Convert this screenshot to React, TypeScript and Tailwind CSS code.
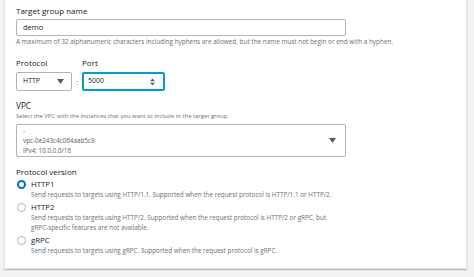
import { useState } from 'react';

const options = [
  {
    id: 'HTTP1',
    lines: ['Send requests to targets using HTTP/1.1. Supported when the request protocol is HTTP/1.1 or HTTP/2.'],
  },
  {
    id: 'HTTP2',
    lines: [
      'Send requests to targets using HTTP/2. Supported when the request protocol is HTTP/2 or gRPC, but',
      'gRPC-specific features are not available.',
    ],
  },
  {
    id: 'gRPC',
    lines: ['Send requests to targets using gRPC. Supported when the request protocol is gRPC.'],
  },
];

function Caret() {
  return (
    <svg width="7" height="5" viewBox="0 0 7 5" className="shrink-0">
      <path d="M0 0h7L3.5 5z" fill="#545b64" />
    </svg>
  );
}

function Spinner() {
  return (
    <svg width="5" height="8" viewBox="0 0 5 8" className="shrink-0">
      <path d="M0 3.2L2.5 0.4 5 3.2z M0 4.8L2.5 7.6 5 4.8z" fill="#545b64" />
    </svg>
  );
}

export default function App() {
  const [version, setVersion] = useState('HTTP1');

  return (
    <div className="w-[474px] h-[277px] bg-[#f2f3f3] font-['Open_Sans',sans-serif] text-[#16191f] overflow-hidden">
      <div className="ml-[4px] w-[463px] h-[269px] bg-white border-x border-b border-[#e3e7e8] shadow-[0_1px_1px_rgba(0,28,36,0.25)] pl-[11px] pt-[5px]">
        {/* Target group name */}
        <div className="text-[8px] leading-[12px]">Target group name</div>
        <div className="mt-[2px] w-[330px] h-[17px] border border-[#aab7b8] rounded-[2px] flex items-center pl-[6px] text-[7.5px]">
          demo
        </div>
        <div className="mt-[1px] text-[6.4px] leading-[9px] text-[#687078]">
          A maximum of 32 alphanumeric characters including hyphens are allowed, but the name must not begin or end with a hyphen.
        </div>

        {/* Protocol / Port */}
        <div className="mt-[11px] flex items-end">
          <div>
            <div className="text-[8px] leading-[12px]">Protocol</div>
            <div className="mt-[3px] w-[56px] h-[19px] border border-[#aab7b8] rounded-[2px] flex items-center justify-between pl-[6px] pr-[7px] text-[7px]">
              <span>HTTP</span>
              <Caret />
            </div>
          </div>
          <div className="w-[10px] h-[19px] flex items-center justify-center text-[8px] text-[#687078]">:</div>
          <div>
            <div className="text-[8px] leading-[12px]">Port</div>
            <div className="mt-[3px] w-[83px] h-[19px] border-2 border-[#00a1c9] rounded-[2px] flex items-center justify-between pl-[4px] pr-[8px] text-[7px]">
              <span>5000</span>
              <Spinner />
            </div>
          </div>
        </div>

        {/* VPC */}
        <div className="mt-[9px] text-[8.2px] leading-[12px]">VPC</div>
        <div className="text-[5.9px] leading-[9px] text-[#687078]">
          Select the VPC with the instances that you want to include in the target group.
        </div>
        <div className="mt-[3px] w-[330px] h-[33px] border border-[#aab7b8] rounded-[2px] flex items-center justify-between pl-[6px] pr-[9px]">
          <div className="text-[6.3px] leading-[10px] text-[#545b64]">
            <div>-</div>
            <div>vpc-0e243c4c064aab5c8</div>
            <div>IPv4: 10.0.0.0/16</div>
          </div>
          <Caret />
        </div>

        {/* Protocol version */}
        <div className="mt-[9px] text-[8px] leading-[12px]">Protocol version</div>
        <div className="mt-[1px] flex flex-col gap-[2px]">
          {options.map((o) => {
            const on = version === o.id;
            return (
              <div key={o.id} className="cursor-pointer" onClick={() => setVersion(o.id)}>
                <div className="flex items-center">
                  <span
                    className={
                      on
                        ? 'ml-[1px] w-[9px] h-[9px] rounded-full border-[2.5px] border-[#0073bb] bg-white'
                        : 'ml-[1px] w-[9px] h-[9px] rounded-full border border-[#aab7b8] bg-white'
                    }
                  />
                  <span className="ml-[5px] text-[7.8px] leading-[11px]">{o.id}</span>
                </div>
                <div className="pl-[15px] text-[6.35px] leading-[10px] text-[#687078]">
                  {o.lines.map((l) => (
                    <div key={l}>{l}</div>
                  ))}
                </div>
              </div>
            );
          })}
        </div>
      </div>
    </div>
  );
}
